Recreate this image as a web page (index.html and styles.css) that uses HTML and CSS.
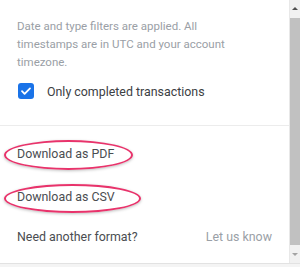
FILE: index.html
```
<!DOCTYPE html>
<html>
<head>
<meta charset="utf-8">
<link rel="stylesheet" href="styles.css">
</head>
<body>
<div class="page">
  <div class="panel">
    <div class="filters">
      <p class="note">Date and type filters are applied. All timestamps are in UTC and your account timezone.</p>
      <label class="check-row">
        <span class="checkbox">
          <svg width="16" height="16" viewBox="0 0 16 16"><path d="M4 8.2l2.6 2.6L12 5.4" fill="none" stroke="#fff" stroke-width="1.8" stroke-linecap="round" stroke-linejoin="round"/></svg>
        </span>
        <span class="check-label">Only completed transactions</span>
      </label>
    </div>
    <div class="actions">
      <div class="action action-pdf"><span>Download as PDF</span><span class="ring ring-pdf"></span></div>
      <div class="action action-csv"><span>Download as CSV</span><span class="ring ring-csv"></span></div>
      <div class="other">
        <span>Need another format?</span>
        <span class="link">Let us know</span>
      </div>
    </div>
  </div>
  <div class="scrollbar">
    <div class="arrow arrow-up"></div>
    <div class="thumb"></div>
    <div class="arrow arrow-down"></div>
  </div>
</div>
</body>
</html>
```

FILE: styles.css
```
* { box-sizing: border-box; }
html, body { margin: 0; padding: 0; }
body {
  width: 300px;
  height: 267px;
  overflow: hidden;
  background: #f4f4f4;
  font-family: Roboto, "Liberation Sans", sans-serif;
  font-size: 12.4px;
  color: #3c4043;
}
.page {
  display: flex;
  height: 264px;
  background: #fff;
  border-bottom: 1px solid #e2e2e2;
}
.panel {
  flex: 1;
  position: relative;
}
.filters {
  padding: 17px 10px 0 17px;
  height: 126px;
  border-bottom: 1px solid #ececec;
}
.note {
  margin: 0;
  font-size: 11.5px;
  line-height: 18px;
  color: #9aa0a6;
  width: 240px;
}
.check-row {
  display: flex;
  align-items: center;
  gap: 13px;
  margin-top: 12px;
  margin-left: 1px;
}
.checkbox {
  width: 16px;
  height: 16px;
  border-radius: 3px;
  background: #1a73e8;
  display: flex;
}
.check-label { color: #3c4043; }
.actions {
  padding: 0 17px;
}
.action {
  position: relative;
  height: 18px;
  line-height: 18px;
  color: #4a4d51;
}
.action-pdf { margin-top: 19px; }
.action-csv { margin-top: 25px; }
.ring {
  position: absolute;
  border: 2.5px solid #e8336b;
  border-radius: 50%;
  box-shadow: 0 1px 3px rgba(0,0,0,0.25);
}
.ring-pdf { left: -13px; top: -5px; width: 129px; height: 30px; }
.ring-csv { left: -13px; top: -4px; width: 137px; height: 29px; }
.other {
  display: flex;
  justify-content: space-between;
  margin-top: 22px;
  line-height: 18px;
  color: #4a4d51;
}
.link { color: #9aa0a6; }
.scrollbar {
  width: 11px;
  background: #f1f1f1;
  border-left: 1px solid #e8e8e8;
  display: flex;
  flex-direction: column;
  align-items: center;
}
.arrow {
  height: 17px;
  width: 100%;
  display: flex;
  justify-content: center;
  align-items: center;
}
.arrow::before {
  content: "";
  border-left: 3px solid transparent;
  border-right: 3px solid transparent;
}
.arrow-up::before { border-bottom: 3px solid #505050; }
.arrow-down::before { border-top: 3px solid #a3a3a3; }
.thumb {
  flex: 1;
  width: 100%;
  background: #c1c1c1;
  margin: 1px 0;
}
```
